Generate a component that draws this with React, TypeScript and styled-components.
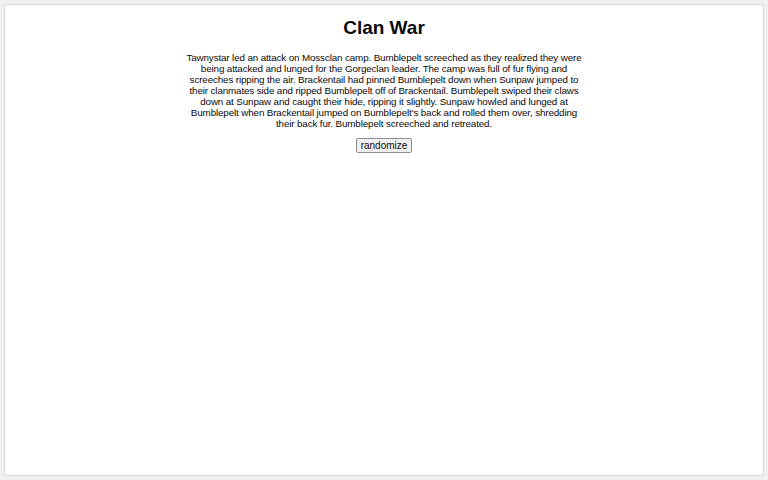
import React from "react";
import styled, { createGlobalStyle } from "styled-components";

const GlobalStyle = createGlobalStyle`
  html, body {
    margin: 0;
    padding: 0;
    background: #f0f0f0;
  }
  body {
    padding: 4px;
    font-family: "Liberation Sans", Arial, sans-serif;
  }
`;

const story =
  "Tawnystar led an attack on Mossclan camp. Bumblepelt screeched as they realized they were being attacked and lunged for the Gorgeclan leader. The camp was full of fur flying and screeches ripping the air. Brackentail had pinned Bumblepelt down when Sunpaw jumped to their clanmates side and ripped Bumblepelt off of Brackentail. Bumblepelt swiped their claws down at Sunpaw and caught their hide, ripping it slightly. Sunpaw howled and lunged at Bumblepelt when Brackentail jumped on Bumblepelt's back and rolled them over, shredding their back fur. Bumblepelt screeched and retreated.";

const App = () => {
  return (
    <>
      <GlobalStyle />
      <Page>
        <Title>Clan War</Title>
        <Story>{story}</Story>
        <RandomButton type="button">randomize</RandomButton>
      </Page>
    </>
  );
};

export default App;

const Page = styled.div`
  box-sizing: border-box;
  height: 472px;
  background: #fff;
  border: 1px solid #dcdcdc;
  display: flex;
  flex-direction: column;
  align-items: center;
  padding-top: 12px;
  color: #0a0a0a;
`;
const Title = styled.h1`
  margin: 0;
  font-size: 19px;
  font-weight: 700;
  line-height: 22px;
`;
const Story = styled.p`
  margin: 13px 0 0;
  width: 400px;
  font-size: 9.8px;
  letter-spacing: -0.12px;
  line-height: 11px;
  text-align: center;
`;
const RandomButton = styled.button`
  margin-top: 9px;
  font-family: "Liberation Sans", Arial, sans-serif;
  font-size: 10px;
  line-height: 11px;
  padding: 1px 4px;
  color: #111;
  background: #efefef;
  border: 1px solid #8f8f8f;
  border-radius: 2px;
`;
